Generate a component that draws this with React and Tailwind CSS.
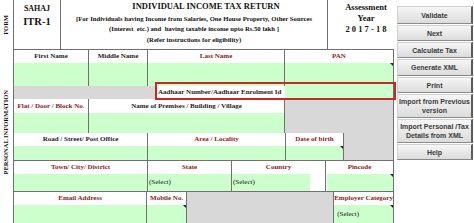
import React from "react";

function Lbl({ children, black = false, className = "" }) {
  return (
    <div
      className={`flex items-center justify-center whitespace-nowrap text-[7px] font-bold leading-none ${
        black ? "text-[#1c1c1c]" : "text-[#8b1a1a]"
      } ${className}`}
    >
      {children}
    </div>
  );
}

function Mark() {
  return (
    <span className="absolute right-0 top-0 h-0 w-0 border-l-[3px] border-t-[3px] border-l-transparent border-t-[#222]" />
  );
}

function Btn({ children, h }) {
  return (
    <div
      className={`flex w-[76px] items-center justify-center border-t border-l border-r-2 border-b border-t-[#d0d0d0] border-l-[#d0d0d0] border-r-[#5c5c5c] border-b-[#8a8a8a] bg-linear-to-b from-[#f6f6f6] to-[#dcdcdc] text-center font-['Liberation_Sans',sans-serif] text-[7px] font-bold leading-[9px] text-[#3a3a3a] ${h}`}
    >
      {children}
    </div>
  );
}

export default function App() {
  return (
    <div className="flex h-[223px] w-[474px] overflow-hidden bg-white font-['Liberation_Serif',serif] text-[#111]">
      {/* Sidebar */}
      <div className="flex w-[14px] shrink-0 flex-col border-r border-[#707070]">
        <div className="flex h-[49px] items-center justify-center">
          <span className="rotate-180 text-[6.5px] font-bold leading-none [writing-mode:vertical-rl]">
            FORM
          </span>
        </div>
        <div className="flex flex-1 items-center justify-center pb-[8px]">
          <span className="rotate-180 whitespace-nowrap text-[6.5px] font-bold leading-none [writing-mode:vertical-rl]">
            PERSONAL INFORMATION
          </span>
        </div>
      </div>

      {/* Main form */}
      <div className="relative flex w-[380px] shrink-0 flex-col">
        {/* Header */}
        <div className="flex h-[50px] shrink-0 border-b border-[#707070]">
          <div className="flex w-[47px] flex-col items-center border-r border-[#707070] pt-[5px] font-bold leading-none">
            <span className="text-[8px]">SAHAJ</span>
            <span className="mt-[4px] text-[10.5px]">ITR-1</span>
          </div>
          <div className="flex w-[267px] flex-col items-center border-r border-[#707070] pt-[2px] font-bold leading-none">
            <span className="ml-[24px] text-[8.5px]">INDIVIDUAL INCOME TAX RETURN</span>
            <span className="mt-[5px] whitespace-nowrap text-[6.7px]">
              [For Individuals having Income from Salaries, One House Property, Other Sources
            </span>
            <span className="mt-[4px] whitespace-pre text-[6.7px]">
              (Interest  etc.) and  having taxable income upto Rs.50 lakh ]
            </span>
            <span className="mt-[4px] text-[6.7px]">(Refer instructions for eligibility)</span>
          </div>
          <div className="flex flex-1 flex-col items-center pl-[10px] pt-[3px] font-bold leading-none">
            <span className="text-[8.5px]">Assessment</span>
            <span className="mt-[2px] text-[8.5px]">Year</span>
            <span className="mt-[3px] whitespace-pre text-[8.5px]">2 0 1 7 - 1 8</span>
          </div>
        </div>

        {/* Name row */}
        <div className="flex h-[36px] shrink-0">
          <div className="flex w-[75px] flex-col border-r border-[#707070]">
            <Lbl black className="h-[13px]">First Name</Lbl>
            <div className="flex-1 bg-[#ccffcc]" />
          </div>
          <div className="flex w-[59px] flex-col border-r border-[#707070]">
            <Lbl black className="h-[13px]">Middle Name</Lbl>
            <div className="flex-1 bg-[#ccffcc]" />
          </div>
          <div className="flex w-[137px] flex-col border-r border-[#707070]">
            <Lbl className="h-[13px]">Last Name</Lbl>
            <div className="flex-1 bg-[#ccffcc]" />
          </div>
          <div className="flex flex-1 flex-col border-r border-[#707070]">
            <Lbl className="h-[13px]">PAN</Lbl>
            <div className="relative flex-1 bg-[#ccffcc]">
              <Mark />
            </div>
          </div>
        </div>

        {/* Aadhaar row */}
        <div className="flex h-[13px] shrink-0">
          <div className="w-[141px] bg-[#d8d8d8]" />
          <Lbl black className="w-[130px] !justify-start pl-[3px]">
            Aadhaar Number/Aadhaar Enrolment Id
          </Lbl>
          <div className="flex-1 border-r border-[#707070] bg-[#ccffcc]" />
        </div>

        {/* Address row 1 */}
        <div className="flex h-[34px] shrink-0">
          <div className="flex w-[75px] flex-col border-r border-[#707070]">
            <Lbl className="h-[14px]">Flat / Door / Block No.</Lbl>
            <div className="flex-1 bg-[#ccffcc]" />
          </div>
          <div className="flex w-[196px] flex-col border-r border-[#707070]">
            <Lbl black className="h-[14px]">Name of Premises / Building / Village</Lbl>
            <div className="flex-1 bg-[#ccffcc]" />
          </div>
          <div className="flex-1 border-r border-[#707070] bg-[#d8d8d8]" />
        </div>

        {/* Address row 2 */}
        <div className="flex h-[28px] shrink-0 border-b border-[#707070]">
          <div className="flex w-[134px] flex-col border-r border-[#707070]">
            <Lbl black className="h-[13px]">Road / Street/ Post Office</Lbl>
            <div className="flex-1 bg-[#ccffcc]" />
          </div>
          <div className="flex w-[138px] flex-col border-r border-[#707070]">
            <Lbl className="h-[13px]">Area / Locality</Lbl>
            <div className="flex-1 bg-[#ccffcc]" />
          </div>
          <div className="flex w-[58px] flex-col border-r border-[#707070]">
            <Lbl className="h-[13px]">Date of birth</Lbl>
            <div className="relative flex-1 bg-[#ccffcc]">
              <Mark />
            </div>
          </div>
          <div className="flex-1 border-r border-[#707070] bg-[#d8d8d8]" />
        </div>

        {/* Address row 3 */}
        <div className="flex h-[31px] shrink-0 border-b border-[#707070]">
          <div className="flex w-[134px] flex-col border-r border-[#707070]">
            <Lbl className="h-[13px]">Town/ City/ District</Lbl>
            <div className="flex-1 bg-[#ccffcc]" />
          </div>
          <div className="flex w-[84px] flex-col border-r border-[#707070]">
            <Lbl className="h-[13px]">State</Lbl>
            <div className="flex flex-1 items-center bg-[#ccffcc] pl-[1px] text-[7px] leading-none">
              (Select)
            </div>
          </div>
          <div className="flex w-[94px] flex-col border-r border-[#707070]">
            <Lbl className="h-[13px]">Country</Lbl>
            <div className="flex flex-1">
              <div className="flex w-[78px] items-center bg-[#ccffcc] pl-[1px] text-[7px] leading-none">
                (Select)
              </div>
            </div>
          </div>
          <div className="flex flex-1 flex-col border-r border-[#707070]">
            <Lbl className="h-[13px]">Pincode</Lbl>
            <div className="relative ml-[1px] flex-1 bg-[#ccffcc]">
              <Mark />
            </div>
          </div>
        </div>

        {/* Contact row */}
        <div className="flex flex-1">
          <div className="flex w-[134px] flex-col border-r border-[#707070]">
            <Lbl className="h-[13px]">Email Address</Lbl>
            <div className="flex-1 bg-[#ccffcc]" />
          </div>
          <div className="flex w-[40px] flex-col border-r border-[#707070]">
            <Lbl className="h-[13px]">Mobile No.</Lbl>
            <div className="relative flex-1 bg-[#ccffcc]">
              <Mark />
            </div>
          </div>
          <div className="w-[148px] border-r border-[#707070] bg-[#d8d8d8]" />
          <div className="flex flex-1 flex-col border-r border-[#707070]">
            <Lbl className="h-[13px]">Employer Category</Lbl>
            <div className="relative flex flex-1 items-center bg-[#ccffcc] pl-[3px] text-[7px] leading-none">
              (Select)
              <Mark />
            </div>
          </div>
        </div>

        {/* Highlight overlay around Aadhaar row */}
        <div className="pointer-events-none absolute left-[141px] top-[82px] h-[18px] w-[241px] border-2 border-[#c62828]" />
      </div>

      {/* Buttons */}
      <div className="flex flex-1 flex-col gap-px pl-[3px] pt-[6px]">
        <Btn h="h-[18px]">Validate</Btn>
        <Btn h="h-[16px]">Next</Btn>
        <Btn h="h-[16px]">Calculate Tax</Btn>
        <Btn h="h-[17px]">Generate XML</Btn>
        <Btn h="h-[16px]">Print</Btn>
        <Btn h="h-[24px]">
          Import from Previous
          <br />
          version
        </Btn>
        <Btn h="h-[24px]">
          Import Personal /Tax
          <br />
          Details from XML
        </Btn>
        <Btn h="h-[16px]">Help</Btn>
      </div>
    </div>
  );
}
